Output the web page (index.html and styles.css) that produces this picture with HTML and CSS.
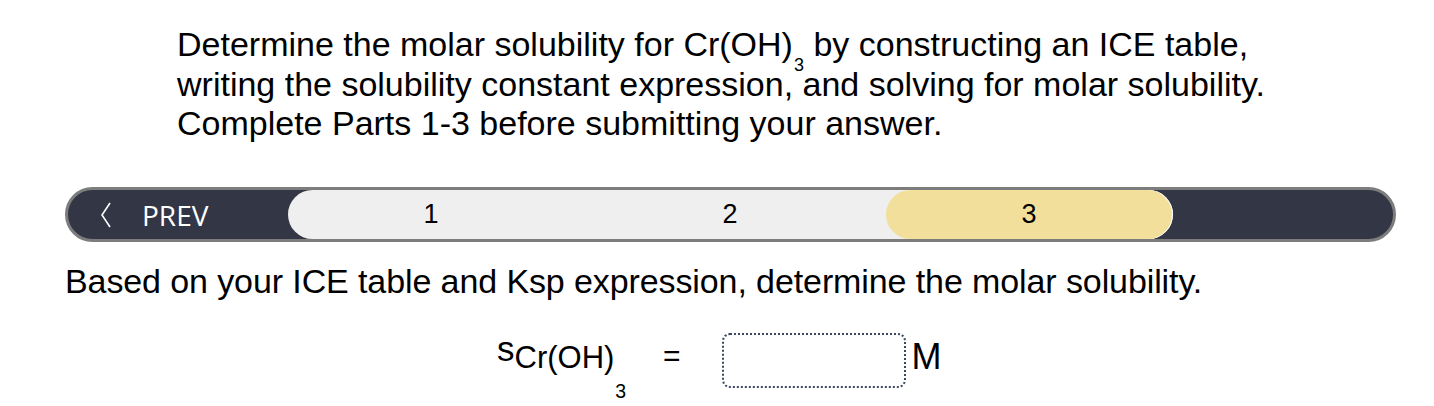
FILE: index.html
```html
<!DOCTYPE html>
<html>
<head>
<meta charset="utf-8">
<link rel="stylesheet" href="styles.css">
</head>
<body>
<div class="page">
  <p class="intro">Determine the molar solubility for Cr(OH)<sub class="isub">3</sub> by constructing an ICE table,<br>writing the solubility constant expression, and solving for molar solubility.<br>Complete Parts 1-3 before submitting your answer.</p>

  <div class="nav">
    <div class="prev">
      <svg class="chev" width="12" height="28" viewBox="0 0 12 28"><path d="M10 2 L2 14 L10 26" fill="none" stroke="#fff" stroke-width="1.6"/></svg>
      <span class="prev-label">PREV</span>
    </div>
    <div class="track">
      <div class="step">1</div>
      <div class="step">2</div>
      <div class="step active">3</div>
    </div>
  </div>

  <p class="question">Based on your ICE table and Ksp expression, determine the molar solubility.</p>

  <div class="formula">
    <span class="sym"><span class="s">s</span><span class="sub">Cr(OH)</span><span class="subsub">3</span></span>
    <span class="eq">=</span>
    <span class="box"></span>
    <span class="unit">M</span>
  </div>
</div>
</body>
</html>
```

FILE: styles.css
```css
html, body {
  margin: 0;
  padding: 0;
  background: #fff;
}
body {
  font-family: "Liberation Sans", Arial, sans-serif;
  color: #000;
}
.page {
  width: 1434px;
  height: 406px;
  overflow: hidden;
}
.intro {
  margin: 0;
  padding: 25px 0 0 177px;
  font-size: 34px;
  line-height: 39px;
}
.isub {
  font-size: 18px;
  vertical-align: -15px;
  line-height: 0;
  margin-left: 1px;
}
.nav {
  margin: 44px 38px 0 65px;
  height: 49px;
  border: 3px solid #7d7d7d;
  border-radius: 28px;
  background: #333745;
  display: flex;
}
.prev {
  width: 220px;
  display: flex;
  align-items: center;
  color: #fff;
}
.chev {
  margin-left: 32px;
}
.prev-label {
  margin-left: 30px;
  font-size: 28px;
  font-family: "Open Sans", "Liberation Sans", sans-serif;
}
.track {
  width: 885px;
  background: #efefef;
  border-radius: 25px;
  display: grid;
  grid-template-columns: 286px 286px 286px;
  column-gap: 13px;
}
.step {
  display: flex;
  align-items: center;
  justify-content: center;
  font-size: 27px;
  border-radius: 25px;
}
.step.active {
  background: #f2df9b;
  box-shadow: 1px 0 0 #fff;
}
.question {
  margin: 20px 0 0 65px;
  font-size: 34px;
  line-height: 39px;
  letter-spacing: -0.1px;
}
.formula {
  margin: 30px 0 0 497px;
  display: flex;
  align-items: flex-start;
  height: 76px;
}
.sym {
  display: flex;
  align-items: flex-start;
  width: 166px;
}
.s {
  font-size: 35px;
  line-height: 40px;
  margin-top: -2px;
}
.sub {
  font-size: 31px;
  line-height: 36px;
  margin-top: 9px;
}
.subsub {
  font-size: 19.5px;
  line-height: 20px;
  margin-top: 50px;
  margin-left: 1px;
}
.eq {
  font-size: 30px;
  line-height: 40px;
  margin-top: 5px;
}
.box {
  margin-left: 41px;
  margin-top: 2px;
  width: 184px;
  height: 55px;
  border: 2px dotted #3b4863;
  border-radius: 8px;
  box-sizing: border-box;
}
.unit {
  margin-left: 6px;
  margin-top: 6px;
  font-size: 36px;
  line-height: 40px;
}
```
